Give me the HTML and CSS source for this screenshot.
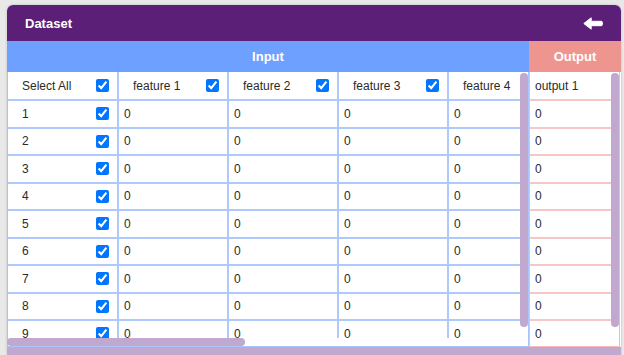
FILE: index.html
```html
<!DOCTYPE html>
<html>
<head>
<meta charset="utf-8">
<link rel="stylesheet" href="styles.css">
</head>
<body>
<div class="card">
  <div class="topbar">
    <span class="title">Dataset</span>
    <svg class="back" width="20" height="13" viewBox="0 0 20 13"><path d="M0.8 6.5 L8.2 0.8 L8.2 4.3 L18.2 4.3 Q19.4 4.3 19.4 5.5 L19.4 7.5 Q19.4 8.7 18.2 8.7 L8.2 8.7 L8.2 12.2 Z" fill="#fff" stroke="#fff" stroke-width="1" stroke-linejoin="round"/></svg>
  </div>
  <div class="panels">
    <section class="panel input">
      <div class="band">Input</div>
      <div class="scroll">
        <div class="viewport">
          <div class="rows">
            <div class="cell first">Select All<input type="checkbox" checked></div>
            <div class="cell head">feature 1<input type="checkbox" checked></div>
            <div class="cell head">feature 2<input type="checkbox" checked></div>
            <div class="cell head">feature 3<input type="checkbox" checked></div>
            <div class="cell head">feature 4</div>

            <div class="cell first">1<input type="checkbox" checked></div><div class="cell">0</div><div class="cell">0</div><div class="cell">0</div><div class="cell">0</div>
            <div class="cell first">2<input type="checkbox" checked></div><div class="cell">0</div><div class="cell">0</div><div class="cell">0</div><div class="cell">0</div>
            <div class="cell first">3<input type="checkbox" checked></div><div class="cell">0</div><div class="cell">0</div><div class="cell">0</div><div class="cell">0</div>
            <div class="cell first">4<input type="checkbox" checked></div><div class="cell">0</div><div class="cell">0</div><div class="cell">0</div><div class="cell">0</div>
            <div class="cell first">5<input type="checkbox" checked></div><div class="cell">0</div><div class="cell">0</div><div class="cell">0</div><div class="cell">0</div>
            <div class="cell first">6<input type="checkbox" checked></div><div class="cell">0</div><div class="cell">0</div><div class="cell">0</div><div class="cell">0</div>
            <div class="cell first">7<input type="checkbox" checked></div><div class="cell">0</div><div class="cell">0</div><div class="cell">0</div><div class="cell">0</div>
            <div class="cell first">8<input type="checkbox" checked></div><div class="cell">0</div><div class="cell">0</div><div class="cell">0</div><div class="cell">0</div>
            <div class="cell first">9<input type="checkbox" checked></div><div class="cell">0</div><div class="cell">0</div><div class="cell">0</div><div class="cell">0</div>
          </div>
        </div>
        <div class="vthumb"></div>
        <div class="hthumb"></div>
      </div>
    </section>
    <section class="panel output">
      <div class="band">Output</div>
      <div class="scroll">
        <div class="viewport">
          <div class="orows">
            <div class="ocell">output 1</div>
            <div class="ocell">0</div>
            <div class="ocell">0</div>
            <div class="ocell">0</div>
            <div class="ocell">0</div>
            <div class="ocell">0</div>
            <div class="ocell">0</div>
            <div class="ocell">0</div>
            <div class="ocell">0</div>
            <div class="ocell">0</div>
          </div>
        </div>
        <div class="vthumb"></div>
      </div>
    </section>
  </div>
  <div class="hbar"></div>
</div>
</body>
</html>
```
FILE: styles.css
```css
body {
  margin: 0;
  background: #e9e9e9;
  font-family: "Liberation Sans", Arial, sans-serif;
  font-size: 12px;
  color: #222;
  overflow: hidden;
}

.card {
  margin: 5px 3px 0 7px;
  width: 614px;
  height: 350px;
  background: #fff;
  border-radius: 6px 6px 0 0;
  box-shadow: 0 0 3px rgba(0, 0, 0, 0.18);
  overflow: hidden;
}

.topbar {
  height: 36px;
  box-sizing: border-box;
  padding: 0 18px 0 18px;
  background: #5c1f78;
  color: #fff;
  display: flex;
  align-items: center;
  justify-content: space-between;
}

.title {
  font-weight: bold;
  font-size: 13px;
}

.back {
  display: block;
  margin-top: 1px;
}

.panels {
  display: flex;
}

.panel.input {
  width: 522px;
}

.panel.output {
  width: 92px;
}

.band {
  height: 31px;
  display: flex;
  align-items: center;
  justify-content: center;
  font-weight: bold;
  font-size: 13px;
  color: #fff;
}

.input .band {
  background: #6ea0ff;
}

.output .band {
  background: #ef9590;
}

.scroll {
  position: relative;
  height: 275px;
  box-sizing: border-box;
  border: 1px solid #a9c5fb;
  border-top: 0;
}

.input .scroll {
  padding-bottom: 8px;
}

.output .scroll {
  border-color: #f5b9b9;
  margin-right: 1px;
}

.viewport {
  height: 100%;
  overflow: hidden;
}

.rows {
  display: grid;
  grid-template-columns: 111px 110px 110px 110px 110px;
  grid-template-rows: 29px;
  grid-auto-rows: 27.5px;
  width: 551px;
}

.cell {
  box-sizing: border-box;
  border-right: 2px solid #b0c9fc;
  border-bottom: 2px solid #b0c9fc;
  display: flex;
  align-items: center;
  padding-left: 5px;
  white-space: nowrap;
  overflow: hidden;
  color: #2a2a2a;
}

.cell.first,
.cell.head {
  padding-left: 14px;
  padding-right: 8px;
  justify-content: space-between;
}

.cell input {
  margin: 0;
  width: 13px;
  height: 13px;
  flex: none;
}

.orows {
  display: grid;
  grid-template-columns: 1fr;
  grid-template-rows: 29px;
  grid-auto-rows: 27.5px;
}

.ocell {
  box-sizing: border-box;
  border-bottom: 2px solid #f7c6c6;
  display: flex;
  align-items: center;
  padding-left: 5px;
  white-space: nowrap;
  color: #2a2a2a;
}

.vthumb {
  position: absolute;
  right: 0;
  top: 1px;
  width: 8px;
  height: 254px;
  border-radius: 4px;
  background: #c0a8cf;
}

.hthumb {
  position: absolute;
  left: -1px;
  bottom: 0;
  width: 238px;
  height: 8px;
  border-radius: 4px;
  background: #c0a8cf;
}

.hbar {
  height: 8px;
  background: #c0a8cf;
}
```
